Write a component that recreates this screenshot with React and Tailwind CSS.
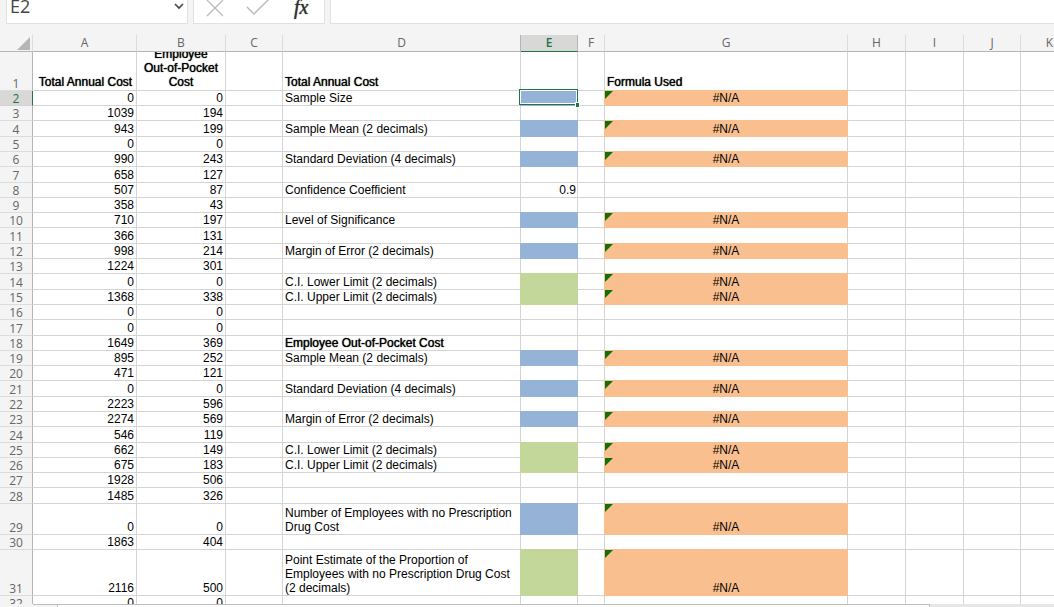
import { useState } from 'react'

const columns = [
  { id: 'A', width: 'w-[104px]' },
  { id: 'B', width: 'w-[89px]' },
  { id: 'C', width: 'w-[57px]' },
  { id: 'D', width: 'w-[238px]' },
  { id: 'E', width: 'w-[57px]' },
  { id: 'F', width: 'w-[27px]' },
  { id: 'G', width: 'w-[243px]' },
  { id: 'H', width: 'w-[58px]' },
  { id: 'I', width: 'w-[58px]' },
  { id: 'J', width: 'w-[57px]' },
  { id: 'K', width: 'w-[58px]' }
]

const fills = {
  blue: 'bg-[#95b3d7] border-[#95b3d7] shadow-[0_-1px_0_0_#95b3d7,-1px_-1px_0_0_#95b3d7,-1px_0_0_0_#95b3d7]',
  green: 'bg-[#c4d79b] border-[#c4d79b] shadow-[0_-1px_0_0_#c4d79b,-1px_-1px_0_0_#c4d79b,-1px_0_0_0_#c4d79b]',
  orange: 'bg-[#fabf8f] border-[#fabf8f] shadow-[0_-1px_0_0_#fabf8f,-1px_-1px_0_0_#fabf8f,-1px_0_0_0_#fabf8f]'
}

const short = 'h-[15px]'
const tall = 'h-[16px]'

const rows = [
  { n: 2, h: short, a: 0, b: 0, d: 'Sample Size', fill: 'blue' },
  { n: 3, h: short, a: 1039, b: 194 },
  { n: 4, h: tall, a: 943, b: 199, d: 'Sample Mean (2 decimals)', fill: 'blue' },
  { n: 5, h: short, a: 0, b: 0 },
  { n: 6, h: short, a: 990, b: 243, d: 'Standard Deviation (4 decimals)', fill: 'blue' },
  { n: 7, h: tall, a: 658, b: 127 },
  { n: 8, h: short, a: 507, b: 87, d: 'Confidence Coefficient', e: '0.9' },
  { n: 9, h: short, a: 358, b: 43 },
  { n: 10, h: short, a: 710, b: 197, d: 'Level of Significance', fill: 'blue' },
  { n: 11, h: tall, a: 366, b: 131 },
  { n: 12, h: short, a: 998, b: 214, d: 'Margin of Error (2 decimals)', fill: 'blue' },
  { n: 13, h: short, a: 1224, b: 301 },
  { n: 14, h: tall, a: 0, b: 0, d: 'C.I. Lower Limit (2 decimals)', fill: 'green' },
  { n: 15, h: short, a: 1368, b: 338, d: 'C.I. Upper Limit (2 decimals)', fill: 'green' },
  { n: 16, h: short, a: 0, b: 0 },
  { n: 17, h: tall, a: 0, b: 0 },
  { n: 18, h: short, a: 1649, b: 369, d: 'Employee Out-of-Pocket Cost', bold: true },
  { n: 19, h: short, a: 895, b: 252, d: 'Sample Mean (2 decimals)', fill: 'blue' },
  { n: 20, h: short, a: 471, b: 121 },
  { n: 21, h: tall, a: 0, b: 0, d: 'Standard Deviation (4 decimals)', fill: 'blue' },
  { n: 22, h: short, a: 2223, b: 596 },
  { n: 23, h: short, a: 2274, b: 569, d: 'Margin of Error (2 decimals)', fill: 'blue' },
  { n: 24, h: tall, a: 546, b: 119 },
  { n: 25, h: short, a: 662, b: 149, d: 'C.I. Lower Limit (2 decimals)', fill: 'green' },
  { n: 26, h: short, a: 675, b: 183, d: 'C.I. Upper Limit (2 decimals)', fill: 'green' },
  { n: 27, h: short, a: 1928, b: 506 },
  { n: 28, h: tall, a: 1485, b: 326 },
  { n: 29, h: 'h-[31px]', a: 0, b: 0, d: 'Number of Employees with no Prescription Drug Cost', fill: 'blue' },
  { n: 30, h: short, a: 1863, b: 404 },
  { n: 31, h: 'h-[46px]', a: 2116, b: 500, d: 'Point Estimate of the Proportion of Employees with no Prescription Drug Cost (2 decimals)', fill: 'green' },
  { n: 32, h: short, a: 0, b: 0 }
]

const cell = 'border-r border-b p-0 align-bottom'
const line = 'border-[#d4d4d4]'
const strong = '[text-shadow:0_0_1px_#000]'

const RowHeader = ({ n, active }) => (
  <th
    scope="row"
    className={`border-r border-b p-0 align-bottom text-center font-["Open_Sans",sans-serif] text-xs leading-[13px] font-normal ${
      active
        ? 'bg-[#d8d8d6] text-[#217346] border-b-[#d4d4d4] border-r-[#217346]'
        : 'bg-[#f4f4f4] text-[#666] border-b-[#dcdcdc] border-r-[#b5b5b5]'
    }`}
  >
    {n}
  </th>
)

const FormulaBar = () => {
  const [name, setName] = useState('E2')
  const [formula, setFormula] = useState('')

  return (
    <div className="flex h-6 shrink-0 items-end gap-[5px] overflow-hidden pl-1.5">
      <div className="flex h-8 w-[182px] shrink-0 items-center border border-[#e1e1e1] bg-white">
        <input
          aria-label="Name box"
          value={name}
          onChange={(e) => setName(e.target.value)}
          className="h-full min-w-0 flex-1 pb-1 pl-[3px] font-['Open_Sans',sans-serif] text-lg text-[#444] outline-none"
        />
        <button type="button" aria-label="Show names" className="flex w-4 justify-center pb-1">
          <svg className="h-2 w-2.5" viewBox="0 0 10 8" fill="none" stroke="#444" strokeWidth="1.6">
            <path d="M1 2L5 6L9 2" />
          </svg>
        </button>
      </div>
      <div className="flex h-8 w-[132px] shrink-0 items-center border border-[#e1e1e1] bg-white pl-3">
        <button type="button" aria-label="Cancel" className="w-[18px]">
          <svg className="h-[18px] w-[18px]" viewBox="0 0 18 18" fill="none" stroke="#b8b8b8" strokeWidth="1.2">
            <path d="M1 1L17 17M17 1L1 17" />
          </svg>
        </button>
        <button type="button" aria-label="Enter" className="ml-[22px] w-6">
          <svg className="h-[18px] w-6" viewBox="0 0 24 18" fill="none" stroke="#b8b8b8" strokeWidth="1.4">
            <path d="M1 8L8 15L23 0" />
          </svg>
        </button>
        <button
          type="button"
          aria-label="Insert function"
          className="ml-6 pb-0.5 font-['Liberation_Serif',serif] text-xl leading-5 text-[#333] italic [text-shadow:0_0_1px_#333]"
        >
          fx
        </button>
      </div>
      <input
        aria-label="Formula"
        value={formula}
        onChange={(e) => setFormula(e.target.value)}
        className="h-8 min-w-0 flex-1 border border-r-0 border-[#e1e1e1] bg-white px-1 outline-none"
      />
    </div>
  )
}

const Sheet = () => (
  <table className="w-max table-fixed border-separate border-spacing-0 bg-white font-['Liberation_Sans',Arial,sans-serif] text-xs leading-[14px] text-black">
    <colgroup>
      <col className="w-[33px]" />
      {columns.map((col) => (
        <col key={col.id} className={col.width} />
      ))}
    </colgroup>
    <thead>
      <tr className="bg-[#f4f4f4] font-['Open_Sans',sans-serif]">
        <th className="h-[17px] border-r border-b border-r-[#dcdcdc] border-b-[#b5b5b5] p-0">
          <svg className="ml-auto mr-0.5 block h-[13px] w-[13px]" viewBox="0 0 13 13" fill="#b5b5b5">
            <path d="M13 0V13H0Z" />
          </svg>
        </th>
        {columns.map((col) => (
          <th
            key={col.id}
            scope="col"
            className={`h-[17px] border-r border-b p-0 text-center align-middle ${
              col.id === 'E'
                ? 'border-r-[#b5b5b5] border-b-[#217346] bg-[#d8d8d6] font-semibold text-[#217346] shadow-[-1px_0_0_0_#b5b5b5]'
                : 'border-r-[#dcdcdc] border-b-[#b5b5b5] font-normal text-[#666]'
            }`}
          >
            {col.id}
          </th>
        ))}
      </tr>
    </thead>
    <tbody>
      <tr>
        <RowHeader n={1} />
        <td className={`${cell} ${line} ${strong} h-[39px] pb-px pl-0.5 text-center whitespace-nowrap`}>
          Total Annual Cost
        </td>
        <td className={`${cell} ${line} ${strong} h-[39px]`}>
          <div className="flex h-[38px] items-end justify-center overflow-hidden pb-px text-center">
            <span>
              Employee
              <br />
              Out-of-Pocket
              <br />
              Cost
            </span>
          </div>
        </td>
        <td className={`${cell} ${line}`} />
        <td className={`${cell} ${line} ${strong} pb-px pl-0.5`}>Total Annual Cost</td>
        <td className={`${cell} ${line}`} />
        <td className={`${cell} ${line}`} />
        <td className={`${cell} ${line} ${strong} pb-px pl-0.5`}>Formula Used</td>
        <td className={`${cell} ${line}`} />
        <td className={`${cell} ${line}`} />
        <td className={`${cell} ${line}`} />
        <td className={`${cell} ${line}`} />
      </tr>
      {rows.map((row) => (
        <tr key={row.n} className={row.h}>
          <RowHeader n={row.n} active={row.n === 2} />
          <td className={`${cell} ${line} pr-0.5 text-right`}>{row.a}</td>
          <td className={`${cell} ${line} pr-0.5 text-right`}>{row.b}</td>
          <td className={`${cell} ${line}`} />
          <td className={`${cell} ${line} pl-0.5 ${row.bold ? strong : ''}`}>{row.d}</td>
          <td className={`${cell} relative pr-px text-right ${row.fill ? fills[row.fill] : line}`}>
            {row.e}
            {row.n === 2 && (
              <>
                <div className="absolute -top-0.5 -right-px bottom-0 -left-0.5 z-10 border border-[#217346] inset-ring inset-ring-white" />
                <div className="absolute -right-0.5 -bottom-0.5 z-10 h-1 w-[3px] bg-[#217346] ring-1 ring-white" />
              </>
            )}
          </td>
          <td className={`${cell} ${line}`} />
          {row.fill ? (
            <td className={`${cell} relative text-center ${fills.orange}`}>
              <span className="absolute top-0 left-0 border-t-8 border-r-8 border-t-[#107010] border-r-transparent" />
              #N/A
            </td>
          ) : (
            <td className={`${cell} ${line}`} />
          )}
          <td className={`${cell} ${line}`} />
          <td className={`${cell} ${line}`} />
          <td className={`${cell} ${line}`} />
          <td className={`${cell} ${line}`} />
        </tr>
      ))}
    </tbody>
  </table>
)

const App = () => {
  return (
    <div className="flex h-screen flex-col overflow-hidden bg-[#f4f4f4]">
      <FormulaBar />
      <main className="mt-[11px] min-h-0 flex-1 overflow-hidden">
        <Sheet />
      </main>
      <footer className="flex h-[3px] shrink-0 pl-[33px]">
        <div className="w-6 border-t border-[#bdbdbd]" />
        <div className="flex-1 border-x border-t border-[#bdbdbd] bg-white" />
        <div className="w-[124px] bg-[#e6e6e6]" />
      </footer>
    </div>
  )
}

export default App
